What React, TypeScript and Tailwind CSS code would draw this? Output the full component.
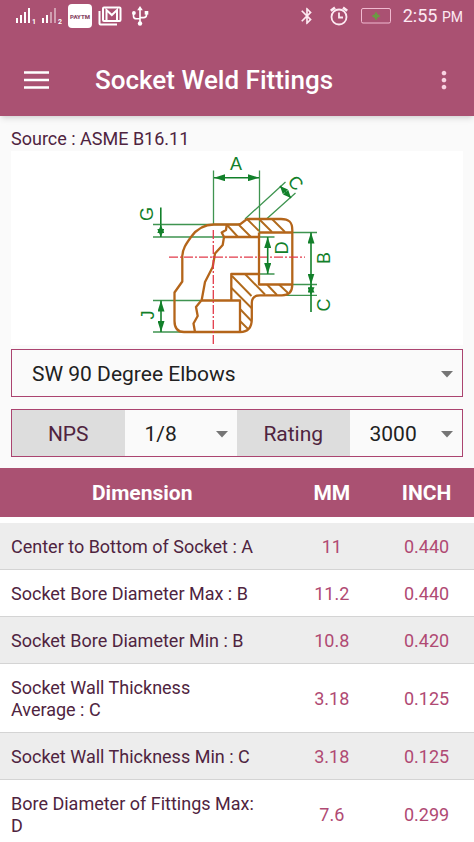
import { MdBluetooth, MdMoreVert } from 'react-icons/md';

const rows = [
  { label: 'Center to Bottom of Socket : A', mm: '11', inch: '0.440' },
  { label: 'Socket Bore Diameter Max : B', mm: '11.2', inch: '0.440' },
  { label: 'Socket Bore Diameter Min : B', mm: '10.8', inch: '0.420' },
  { label: 'Socket Wall Thickness Average : C', mm: '3.18', inch: '0.125' },
  { label: 'Socket Wall Thickness Min : C', mm: '3.18', inch: '0.125' },
  { label: 'Bore Diameter of Fittings Max: D', mm: '7.6', inch: '0.299' },
];

function Signal({ sim, dim }: { sim: string; dim?: boolean }) {
  return (
    <svg width="20" height="18" viewBox="0 0 20 18" aria-hidden="true">
      <g fill="#fff">
        <rect x="0" y="11" width="2" height="5" />
        <rect x="4" y="8" width="2" height="8" />
        <rect x="8" y="5" width="2" height="11" opacity={dim ? 0.45 : 1} />
        <rect x="12" y="1" width="2" height="15" opacity={dim ? 0.45 : 1} />
      </g>
      <text x="16" y="17" fontSize="7" fontWeight="700" fill="#fff">{sim}</text>
    </svg>
  );
}

/* Android status bar */
function StatusBar() {
  return (
    <div className="flex h-8 items-center justify-between pl-4 pr-[11px] text-[#fdeaf2]">
      <div className="flex items-center gap-1.5">
        <Signal sim="1" />
        <Signal sim="2" dim />
        <span className="flex h-6 w-6 items-center justify-center rounded-sm bg-white text-[6px] font-black text-[#8a4a68]">
          PAYTM
        </span>
        <svg width="24" height="20" viewBox="0 0 24 20" fill="none" stroke="#fff" strokeWidth="2" aria-hidden="true">
          <path d="M1.5 5v12.500a1 1 0 0 0 1 1H19" />
          <rect x="5" y="1.500" width="17.500" height="13.500" rx="1" />
          <path d="M8.500 14.500V4l5.300 5L19 4v10.500" />
        </svg>
        <svg width="20" height="20" viewBox="0 0 20 20" className="ml-1" aria-hidden="true">
          <path d="M8 3.500v13M1.500 7v3.200c0 2 1 2.600 3 2.600H8M14.500 7v2c0 2-1 2.600-3 2.600H8" fill="none" stroke="#fff" strokeWidth="1.600" />
          <path d="M8 0l2.800 4.200H5.200z" fill="#fff" />
          <circle cx="8" cy="17.500" r="2.200" fill="#fff" />
          <circle cx="1.900" cy="7" r="1.900" fill="#fff" />
          <rect x="12.700" y="5" width="3.600" height="3.600" fill="#fff" />
        </svg>
      </div>
      <div className="flex items-center gap-3">
        <MdBluetooth className="h-5 w-5" />
        <svg width="20" height="20" viewBox="0 0 20 20" fill="none" stroke="currentColor" strokeWidth="1.800" aria-hidden="true">
          <circle cx="10" cy="11" r="7.500" />
          <path d="M10 6.500V11.500h4" />
          <path d="M1.800 4.800 6 1.600M18.200 4.800 14 1.600" strokeWidth="2.600" />
        </svg>
        <svg width="30" height="16" viewBox="0 0 30 16" aria-hidden="true">
          <rect x="0.500" y="0.500" width="29" height="14.500" rx="1.500" fill="none" stroke="#f0b9d0" />
          <path d="M15 3.500l1.500 2.800 3 1.700-3 1.700L15 12.500l-1.500-2.800-3-1.700 3-1.700z" fill="#6a9a43" />
        </svg>
        <span className="text-lg leading-6">
          2:55 <span className="text-sm">PM</span>
        </span>
      </div>
    </div>
  );
}

/* Section drawing of the socket weld elbow with its dimension letters */
function ElbowDrawing() {
  return (
    <svg viewBox="11 151 452 194" className="block w-full bg-white" role="img" aria-label="Socket weld elbow">
      <defs>
        <marker id="tip" viewBox="0 0 11 7" refX="11" refY="3.500" markerWidth="11" markerHeight="7" markerUnits="userSpaceOnUse" orient="auto-start-reverse">
          <path d="M0 0L11 3.500L0 7z" fill="#12802a" />
        </marker>
        <marker id="tipShort" viewBox="0 0 8 7" refX="8" refY="3.500" markerWidth="8" markerHeight="7" markerUnits="userSpaceOnUse" orient="auto-start-reverse">
          <path d="M0 0L8 3.500L0 7z" fill="#12802a" />
        </marker>
      </defs>

      {/* Extension lines */}
      <g stroke="#3f9450" strokeWidth="1.300" fill="none">
        <path d="M213.500 170.500V224M259.500 170.500V237" />
        <path d="M153 224.500H240M153 237H224" />
        <path d="M153 300.500H202M153 332H182" />
        <path d="M245 219L285.500 182M266.500 219L295.500 193" />
        <path d="M292 232.500H317M292 284.500H317M285 295.300H317M259 237H274.500M259 274H274.500" />
      </g>

      {/* Section hatching */}
      <g stroke="#b06a1c" strokeWidth="1.900" fill="none">
        <path d="M227 225L238 237M239 225L251 237M247 219L259 231M259 219L272 232M272 219L285 232" />
        <path d="M232 276L251.500 296M231.500 288L252 308.500M245 274L265 294.500M240 309L251.500 321M240 321L248 329M267 284.500L277 295M279 284.500L288 293" />
      </g>

      {/* Fitting outline */}
      <g stroke="#b4651a" strokeWidth="2.300" fill="none" strokeLinejoin="round">
        <path d="M240 224.500H214C203 224.500 196 230 191 237C186 244 182.500 249 182.300 256V281.500L174.500 292.500V321C174.500 328 178 332 184 332H240C248 332 251.800 327 251.800 319V303C251.800 298 255 295.300 260 295.300H282C289 295.300 292.300 291 292.300 284.500V230C292.300 222 289 219 281 219H248C244.500 219 243 224.500 238 224.500" />
        <path d="M224 237H259.500M259.500 232.500H292.300M259 232.500V284.500H292.300M259 274H231.300V300.500M202 300.500H240V332" />
        <path d="M226.700 225L226 230L221.700 232.500L224 237L222.700 245L215 253.500L212.700 267L205 282L201.700 300L196 307L197.700 316L193.500 323.500L195 332" />
      </g>

      {/* Centre lines */}
      <g stroke="#e23b4a" strokeWidth="1.300" strokeDasharray="9 2 2 2">
        <path d="M169 257.200H305" />
        <path d="M213.300 230V344" />
      </g>

      {/* Dimension lines */}
      <g stroke="#12802a" strokeWidth="1.600" fill="none">
        <path d="M214 177.700H259" markerStart="url(#tip)" markerEnd="url(#tip)" />
        <path d="M160.800 207.500V224.500" />
        <path d="M160.800 225V237" markerStart="url(#tipShort)" markerEnd="url(#tipShort)" />
        <path d="M161 300.500V332" markerStart="url(#tip)" markerEnd="url(#tip)" />
        <path d="M267.700 237V274" markerStart="url(#tip)" markerEnd="url(#tip)" />
        <path d="M311 232.500V284.500" markerStart="url(#tip)" markerEnd="url(#tip)" />
        <path d="M311 284.500V295.300" markerStart="url(#tipShort)" markerEnd="url(#tipShort)" />
        <path d="M311 295V312" />
        <path d="M280 186L291 198" markerStart="url(#tipShort)" markerEnd="url(#tipShort)" />
      </g>

      <g fill="#12802a" fontSize="18" textAnchor="middle" className="font-['Liberation_Sans',sans-serif]">
        <text x="236" y="170">A</text>
        <text transform="translate(153 214) rotate(-90)">G</text>
        <text transform="translate(154 315) rotate(-90)">J</text>
        <text transform="translate(288 248) rotate(-90)">D</text>
        <text transform="translate(330 258) rotate(-90)">B</text>
        <text transform="translate(330 305) rotate(-90)">C</text>
        <text transform="translate(291 187) rotate(48)">C</text>
      </g>
    </svg>
  );
}

function Arrow() {
  return (
    <svg className="pointer-events-none absolute right-2 top-1/2 -mt-0.5" width="14" height="7" viewBox="0 0 14 7" aria-hidden="true">
      <path d="M1 0h12L7 6.500z" fill="#757575" />
    </svg>
  );
}

export default function App() {
  return (
    <div className="min-h-screen bg-[#fafafa] font-[Roboto,sans-serif] text-[#4f2440]">
      <header className="bg-[#aa5172] text-white shadow-md">
        <StatusBar />
        <div className="flex h-[84px] items-center pl-6 pr-4 pt-3">
          <button type="button" aria-label="Open menu" className="mr-[46px]">
            <svg width="25" height="20" viewBox="0 0 25 20" aria-hidden="true">
              <path d="M0 2.500h25M0 10h25M0 17.500h25" stroke="#fff" strokeWidth="2.600" />
            </svg>
          </button>
          <h1 className="flex-1 text-[26px] font-medium leading-8">Socket Weld Fittings</h1>
          <button type="button" aria-label="More options" className="text-[#f9d3e2]">
            <MdMoreVert className="h-7 w-7" />
          </button>
        </div>
      </header>

      <main>
        <div className="px-[11px] pt-[11px]">
          <p className="text-lg leading-6">Source : ASME B16.11</p>
          <ElbowDrawing />

          <div className="relative mt-1 h-12 border border-[#ab4470]">
            <select aria-label="Fitting type" className="h-full w-full appearance-none pl-5 pt-1 text-[21px] text-[#212121]">
              <option>SW 90 Degree Elbows</option>
            </select>
            <Arrow />
          </div>

          <div className="mt-3 flex h-12 border border-[#ab4470] text-[21px]">
            <label htmlFor="nps" className="flex flex-1 items-center justify-center bg-[#dddddd] pt-1">NPS</label>
            <div className="relative flex-1">
              <select id="nps" className="h-full w-full appearance-none pl-5 pt-1 text-[#212121]">
                <option>1/8</option>
              </select>
              <Arrow />
            </div>
            <label htmlFor="rating" className="flex flex-1 items-center justify-center bg-[#dddddd] pt-1">Rating</label>
            <div className="relative flex-1">
              <select id="rating" className="h-full w-full appearance-none pl-5 pt-1 text-[#212121]">
                <option>3000</option>
              </select>
              <Arrow />
            </div>
          </div>
        </div>

        <table className="mt-[11px] w-full table-fixed border-collapse bg-white text-lg leading-[22px]">
          <thead className="border-b-[6px] border-white bg-[#aa5172] text-[21px] text-white">
            <tr className="h-[52px]">
              <th className="w-3/5 font-bold">Dimension</th>
              <th className="w-1/5 font-bold">MM</th>
              <th className="w-1/5 font-bold">INCH</th>
            </tr>
          </thead>
          <tbody>
            {rows.map((row) => (
              <tr key={row.label} className="border-b border-[#d4d4d4] odd:bg-[#ededed]">
                <td className="pt-[13px] pb-[11px] pl-[11px] pr-7">{row.label}</td>
                <td className="pt-[13px] pb-[11px] text-center text-[#b04a73]">{row.mm}</td>
                <td className="pt-[13px] pb-[11px] text-center text-[#b04a73]">{row.inch}</td>
              </tr>
            ))}
          </tbody>
        </table>
      </main>
    </div>
  );
}
